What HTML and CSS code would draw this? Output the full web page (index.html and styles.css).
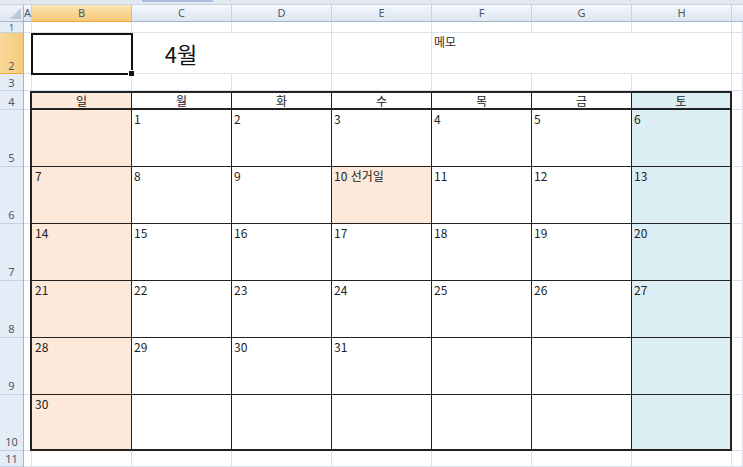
FILE: index.html
```html
<!DOCTYPE html>
<html lang="ko">
<head>
<meta charset="utf-8">
<title>4월 달력</title>
<link rel="stylesheet" href="styles.css">
</head>
<body>
<div class="app">
  <div class="topstrip"><div class="tab"></div></div>
  <div class="colheads">
    <div class="corner"><span class="tri"></span></div>
    <div class="ch ch-a">A</div>
    <div class="ch ch-sel">B</div>
    <div class="ch">C</div>
    <div class="ch">D</div>
    <div class="ch">E</div>
    <div class="ch">F</div>
    <div class="ch">G</div>
    <div class="ch">H</div>
    <div class="ch ch-i"></div>
  </div>
  <div class="main">
    <div class="rowheads">
      <div class="rh r-s">1</div>
      <div class="rh r-t rh-sel">2</div>
      <div class="rh r-m">3</div>
      <div class="rh r-h">4</div>
      <div class="rh r-d">5</div>
      <div class="rh r-d">6</div>
      <div class="rh r-d">7</div>
      <div class="rh r-d">8</div>
      <div class="rh r-d">9</div>
      <div class="rh r-e">10</div>
      <div class="rh r-l">11</div>
    </div>
    <div class="sheet">
      <!-- row 1 -->
      <div class="g"></div><div class="g"></div><div class="g"></div><div class="g"></div><div class="g"></div><div class="g"></div><div class="g"></div><div class="g"></div><div class="g"></div>
      <!-- row 2 -->
      <div class="g"></div>
      <div class="selcell"></div>
      <div class="g month nogr">4월</div>
      <div class="g"></div>
      <div class="g"></div>
      <div class="g memo">메모</div>
      <div class="g"></div>
      <!-- row 3 -->
      <div class="g"></div><div class="g"></div><div class="g"></div><div class="g"></div><div class="g"></div><div class="g"></div><div class="g"></div><div class="g"></div><div class="g"></div>
      <!-- row 4 weekday header -->
      <div class="g na"></div>
      <div class="c hd first sun">일</div>
      <div class="c hd">월</div>
      <div class="c hd">화</div>
      <div class="c hd">수</div>
      <div class="c hd">목</div>
      <div class="c hd">금</div>
      <div class="c hd last sat">토</div>
      <div class="g"></div>
      <!-- row 5 -->
      <div class="g na"></div>
      <div class="c first sun"></div>
      <div class="c">1</div>
      <div class="c">2</div>
      <div class="c">3</div>
      <div class="c">4</div>
      <div class="c">5</div>
      <div class="c last sat">6</div>
      <div class="g"></div>
      <!-- row 6 -->
      <div class="g na"></div>
      <div class="c first sun">7</div>
      <div class="c">8</div>
      <div class="c">9</div>
      <div class="c sun">10 선거일</div>
      <div class="c">11</div>
      <div class="c">12</div>
      <div class="c last sat">13</div>
      <div class="g"></div>
      <!-- row 7 -->
      <div class="g na"></div>
      <div class="c first sun">14</div>
      <div class="c">15</div>
      <div class="c">16</div>
      <div class="c">17</div>
      <div class="c">18</div>
      <div class="c">19</div>
      <div class="c last sat">20</div>
      <div class="g"></div>
      <!-- row 8 -->
      <div class="g na"></div>
      <div class="c first sun">21</div>
      <div class="c">22</div>
      <div class="c">23</div>
      <div class="c">24</div>
      <div class="c">25</div>
      <div class="c">26</div>
      <div class="c last sat">27</div>
      <div class="g"></div>
      <!-- row 9 -->
      <div class="g na"></div>
      <div class="c first sun">28</div>
      <div class="c">29</div>
      <div class="c">30</div>
      <div class="c">31</div>
      <div class="c"></div>
      <div class="c"></div>
      <div class="c last sat"></div>
      <div class="g"></div>
      <!-- row 10 -->
      <div class="g na"></div>
      <div class="c first sun bot">30</div>
      <div class="c bot"></div>
      <div class="c bot"></div>
      <div class="c bot"></div>
      <div class="c bot"></div>
      <div class="c bot"></div>
      <div class="c last sat bot"></div>
      <div class="g"></div>
      <!-- row 11 -->
      <div class="g"></div><div class="g"></div><div class="g"></div><div class="g"></div><div class="g"></div><div class="g"></div><div class="g"></div><div class="g"></div><div class="g"></div>
    </div>
  </div>
</div>
</body>
</html>
```

FILE: styles.css
```css
* { box-sizing: border-box; }

html, body {
  margin: 0;
  padding: 0;
  background: #ffffff;
}

body {
  width: 743px;
  height: 467px;
  overflow: hidden;
  font-family: "Noto Sans CJK KR", "Noto Sans", sans-serif;
  color: #222;
}

.app {
  display: flex;
  flex-direction: column;
  width: 743px;
  height: 467px;
}

/* thin strip above the column headers */
.topstrip {
  height: 5px;
  background: #e3e9f1;
  border-bottom: 1px solid #c9d5e4;
  display: flex;
}
.tab {
  margin-left: 142px;
  width: 71px;
  height: 2px;
  background: #a9bfdb;
}

/* column headers */
.colheads {
  display: flex;
  height: 17px;
}
.corner {
  width: 24px;
  flex: none;
  position: relative;
  background: linear-gradient(#eef2f8, #dfe7f1);
  border-right: 1px solid #9eb6ce;
  border-bottom: 1px solid #9eb6ce;
}
.tri {
  position: absolute;
  right: 2px;
  bottom: 2px;
  width: 0;
  height: 0;
  border-left: 11px solid transparent;
  border-bottom: 11px solid #b9c8da;
}
.ch {
  width: 100px;
  flex: none;
  overflow: hidden;
  background: linear-gradient(#f6f9fc, #e6edf6 55%, #dfe7f1);
  border-right: 1px solid #c5d2e1;
  border-bottom: 1px solid #9eb6ce;
  font-family: "Noto Sans", sans-serif;
  font-size: 11px;
  line-height: 16px;
  color: #4d5866;
  text-align: center;
}
.ch-a {
  width: 8px;
  text-align: left;
}
.ch-sel {
  background: linear-gradient(#fbe4b8, #f9d592 55%, #f6c978);
  border-bottom: 1px solid #f1a83a;
  border-right-color: #e8b872;
}
.ch-i {
  width: 11px;
  border-right: none;
}

/* main area */
.main {
  display: flex;
  flex: 1;
}

.rowheads {
  width: 24px;
  flex: none;
  display: flex;
  flex-direction: column;
  background: #e4ecf7;
  border-right: 1px solid #9eb6ce;
}
.rh {
  flex: none;
  overflow: hidden;
  display: flex;
  align-items: flex-end;
  justify-content: center;
  padding-bottom: 1px;
  border-bottom: 1px solid #c3d1e2;
  font-family: "Noto Sans", sans-serif;
  font-size: 11px;
  line-height: 13px;
  color: #4d5866;
}
.rh-sel {
  background: linear-gradient(to right, #f9d89a, #f6cb7d);
  border-bottom-color: #f1a83a;
}
.r-s {
  height: 11px;
  padding-bottom: 0;
  align-items: center;
  font-size: 9px;
  line-height: 9px;
  overflow: visible;
}
.r-t { height: 41px; }
.r-m { height: 17px; }
.r-h { height: 19px; }
.r-d { height: 57px; padding-bottom: 2px; }
.r-e { height: 56px; padding-bottom: 2px; }
.r-l { height: 16px; }

/* spreadsheet grid */
.sheet {
  display: grid;
  grid-template-columns: 8px repeat(7, 100px) 11px;
  grid-template-rows: 11px 41px 17px 19px 57px 57px 57px 57px 57px 56px 16px;
}

.g {
  border-right: 1px solid #dbe1ea;
  border-bottom: 1px solid #dbe1ea;
}
.g.na { border-right: none; }
.g.nogr { border-right: none; }

.selcell {
  position: relative;
  border: 2px solid #111;
  margin: 0 -1px -1px -1px;
}
.selcell::after {
  content: "";
  position: absolute;
  right: -4px;
  bottom: -4px;
  width: 5px;
  height: 5px;
  background: #111;
  border: 1px solid #fff;
}

.month {
  display: flex;
  align-items: center;
  justify-content: center;
  font-size: 22px;
  line-height: 24px;
  color: #111;
  padding-right: 2px;
}

.memo {
  grid-column: span 3;
  font-size: 12px;
  line-height: 14px;
  padding: 2px 0 0 2px;
  color: #3a2a22;
}

/* calendar cells */
.c {
  border-right: 1px solid #222;
  border-bottom: 1px solid #222;
  font-size: 12px;
  line-height: 15px;
  padding: 1px 0 0 2px;
  color: #222;
  background: #fff;
}
.c.first {
  border-left: 2px solid #222;
  margin-left: -2px;
  padding-left: 3px;
}
.c.last { border-right: 2px solid #222; }
.c.hd {
  border-top: 2px solid #222;
  border-bottom: 2px solid #222;
  text-align: center;
  padding: 0;
  line-height: 15px;
}
.c.bot { border-bottom: 2px solid #222; }
.c.sun { background: #fce9da; }
.c.sat { background: #dbeef3; }
```
